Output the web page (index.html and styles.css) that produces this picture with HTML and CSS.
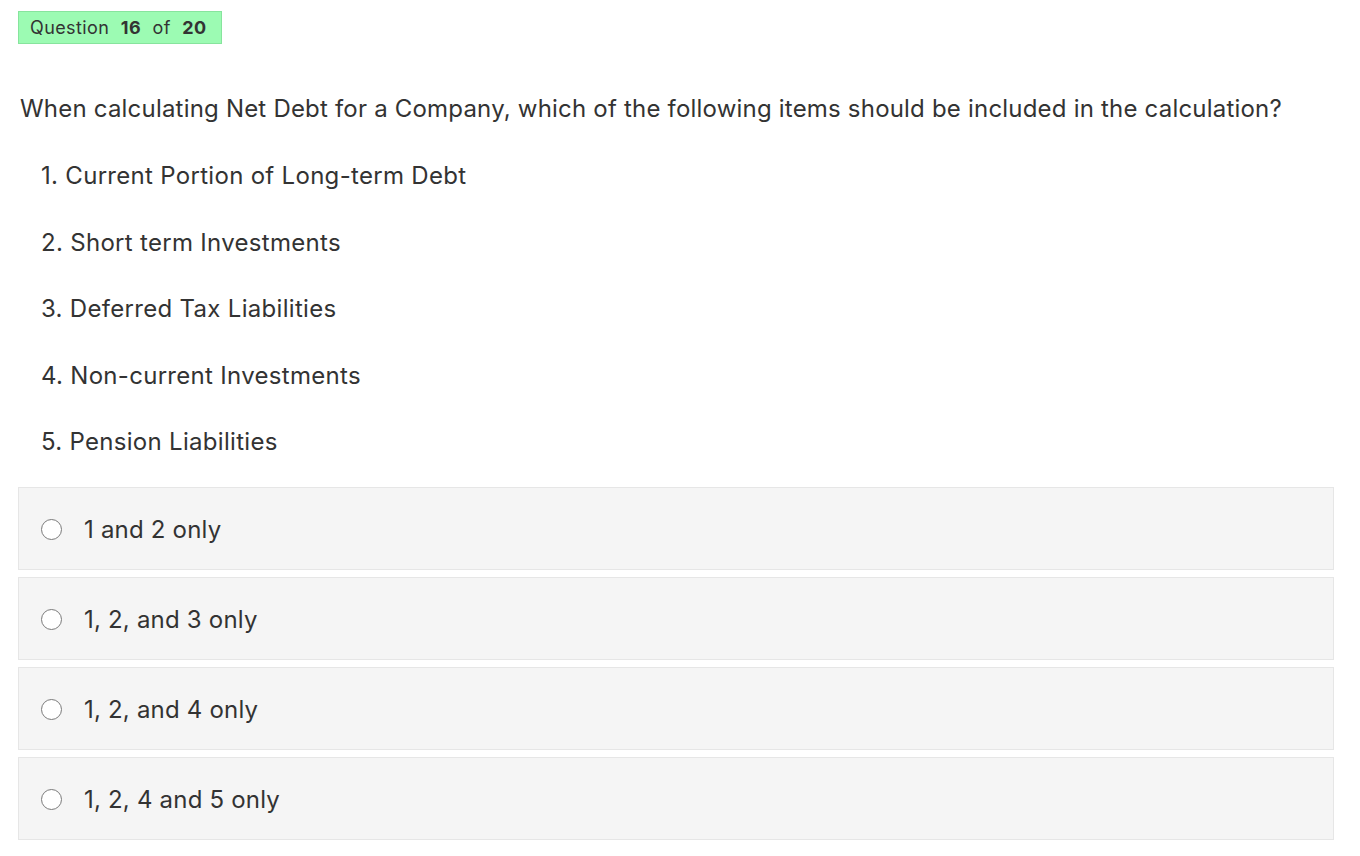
FILE: index.html
```html
<!DOCTYPE html>
<html>
<head>
<meta charset="utf-8">
<link rel="stylesheet" href="styles.css">
</head>
<body>
<div class="page">
  <div class="badge">Question <b>16</b> of <b>20</b></div>
  <p class="question">When calculating Net Debt for a Company, which of the following items should be included in the calculation?</p>
  <ol class="items">
    <li>Current Portion of Long-term Debt</li>
    <li>Short term Investments</li>
    <li>Deferred Tax Liabilities</li>
    <li>Non-current Investments</li>
    <li>Pension Liabilities</li>
  </ol>
  <div class="options">
    <label class="option"><span class="radio"></span><span>1 and 2 only</span></label>
    <label class="option"><span class="radio"></span><span>1, 2, and 3 only</span></label>
    <label class="option"><span class="radio"></span><span>1, 2, and 4 only</span></label>
    <label class="option"><span class="radio"></span><span>1, 2, 4 and 5 only</span></label>
  </div>
</div>
</body>
</html>
```
FILE: styles.css
```css
html, body { margin: 0; padding: 0; background: #fff; }
body { font-family: Inter, "Noto Sans", sans-serif; color: #333; }
.page { padding: 11px 26px 0 18px; }
.badge {
  display: inline-block;
  background: #9cfbb3;
  border: 1px solid #87e49d;
  padding: 6px 15px 6px 11px;
  font-size: 18px;
  line-height: 19px;
  letter-spacing: 0.4px;
  word-spacing: 6px;
  color: #333;
}
.badge b { font-weight: 700; }
.question {
  margin: 50px 0 0 2px;
  font-size: 24px;
  line-height: 30px;
  letter-spacing: 0.2px;
}
.items {
  list-style: none;
  counter-reset: n;
  margin: 0;
  padding: 37px 0 0 23px;
}
.items li {
  counter-increment: n;
  font-size: 24px;
  line-height: 30px;
  letter-spacing: 0.3px;
  margin-bottom: 36.5px;
}
.items li::before { content: counter(n) ". "; }
.options { display: flex; flex-direction: column; gap: 7px; margin-top: -7px; }
.option {
  display: flex;
  align-items: center;
  height: 83px;
  box-sizing: border-box;
  background: #f5f5f5;
  border: 1px solid #e6e6e6;
  padding: 3px 0 0 22px;
  font-size: 24px;
  letter-spacing: 0.2px;
}
.radio {
  width: 19px; height: 19px;
  border: 1px solid #7a7a7a;
  border-radius: 50%;
  background: #fff;
  margin: 0 22px 0 0;
  flex: none;
}
```
